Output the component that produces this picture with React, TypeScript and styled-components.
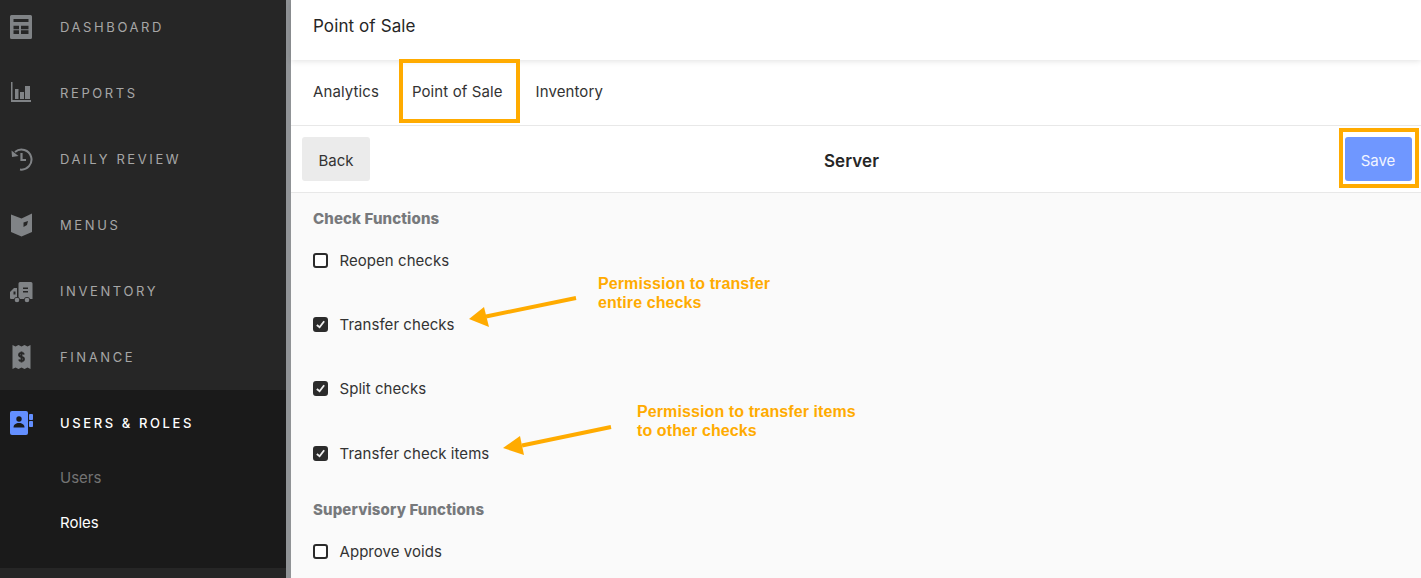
import React from 'react';
import styled, { createGlobalStyle } from 'styled-components';

const GlobalStyle = createGlobalStyle`
    html, body {
        margin: 0;
        padding: 0;
        height: 578px;
        overflow: hidden;
        background: #fafafa;
        font-family: Inter, "Liberation Sans", sans-serif;
    }
`;

const Page = styled.div`
    display: flex;
    width: 1421px;
    height: 578px;
    overflow: hidden;
`;

const Sidebar = styled.nav`
    width: 286px;
    flex-shrink: 0;
    background: #262626;
    border-right: 5px solid #909396;
    box-sizing: content-box;
`;

const NavList = styled.div`
    margin-top: -6px;
`;

const NavRow = styled.div<{ $active?: boolean }>`
    height: 66px;
    display: flex;
    align-items: center;
    gap: 27px;
    padding-left: 10px;
    color: ${(p) => (p.$active ? '#ffffff' : '#a6a6a6')};
    font-size: 13px;
    font-weight: ${(p) => (p.$active ? 500 : 400)};
    letter-spacing: 2.6px;
`;

const IconSlot = styled.div`
    width: 23px;
    height: 24px;
    display: flex;
    flex-shrink: 0;
    color: #808386;
`;

const ActiveGroup = styled.div`
    background: #1a1a1a;
    height: 178px;
`;

const SubItem = styled.div<{ $active?: boolean }>`
    height: 45px;
    display: flex;
    align-items: center;
    padding-left: 60px;
    font-size: 15px;
    color: ${(p) => (p.$active ? '#ffffff' : '#737373')};
`;

const SubList = styled.div`
    margin-top: -1px;
`;

const Main = styled.main`
    flex: 1;
    min-width: 0;
    position: relative;
    display: flex;
    flex-direction: column;
    letter-spacing: 0.1px;
`;

const TitleBar = styled.header`
    height: 60px;
    flex-shrink: 0;
    padding: 0 22px 8px;
    box-sizing: border-box;
    display: flex;
    align-items: center;
    background: #fff;
    font-size: 17px;
    color: #262626;
    box-shadow: 0 1px 6px rgba(0, 0, 0, 0.12);
    position: relative;
`;

const TabBar = styled.div`
    height: 66px;
    flex-shrink: 0;
    display: flex;
    align-items: center;
    background: #fff;
    border-bottom: 1px solid #e8e8e8;
    box-sizing: border-box;
    padding: 0 0 3px 22px;
    font-size: 15px;
    color: #333;
`;

const Tab = styled.div<{ $marked?: boolean }>`
    height: 64px;
    flex-shrink: 0;
    display: flex;
    align-items: center;
    box-sizing: border-box;
    position: relative;
    ${(p) =>
        p.$marked
            ? `
        border: 4px solid #ffab00;
        padding: 0 13px 0 9px;
        margin-left: 20px;
        margin-right: 16px;
    `
            : ''}
`;

const ActionBar = styled.div`
    height: 67px;
    flex-shrink: 0;
    display: grid;
    grid-template-columns: 1fr auto 1fr;
    align-items: center;
    background: #fff;
    border-bottom: 1px solid #e8e8e8;
    box-sizing: border-box;
    padding: 0 2px 0 11px;
`;

const BackButton = styled.button`
    justify-self: start;
    width: 68px;
    height: 44px;
    padding: 2px 0 0;
    border: none;
    border-radius: 3px;
    background: #ebebeb;
    color: #333;
    font: inherit;
    font-size: 15px;
`;

const ActionTitle = styled.div`
    margin-right: 18px;
    padding-top: 4px;
    font-size: 17px;
    font-weight: 600;
    color: #262626;
`;

const SaveFrame = styled.div`
    justify-self: end;
    width: 80px;
    height: 60px;
    margin-top: -2px;
    border: 4px solid #ffab00;
    box-sizing: border-box;
    display: flex;
    align-items: center;
    justify-content: center;
`;

const SaveButton = styled.button`
    width: 67px;
    height: 44px;
    margin: 2px 2px 0 0;
    padding: 2px 0 0;
    border: none;
    border-radius: 3px;
    background: #6f97ff;
    color: #f2f5ff;
    font: inherit;
    font-size: 15px;
`;

const Content = styled.section`
    flex: 1;
    background: #fafafa;
    padding: 0 22px;
    color: #333;
`;

const SectionTitle = styled.h3<{ $first?: boolean }>`
    margin: ${(p) => (p.$first ? '0 0 -2px' : '13px 0 -2px')};
    line-height: 22px;
    font-size: 15px;
    font-weight: 800;
    letter-spacing: 0.12px;
    color: #77797c;
    padding-top: ${(p) => (p.$first ? '15px' : '0')};
`;

const Permission = styled.div<{ $tall?: boolean }>`
    display: flex;
    align-items: center;
    gap: 11.5px;
    height: 64px;
    padding: ${(p) => (p.$tall ? '1px 0' : '0')};
    font-size: 15px;
    letter-spacing: 0.05px;
`;

const Check = styled.span<{ $on?: boolean }>`
    width: 15px;
    height: 15px;
    box-sizing: border-box;
    flex-shrink: 0;
    border: 2px solid #2b2b2b;
    border-radius: 3px;
    background: ${(p) => (p.$on ? '#2b2b2b' : '#fff')};
    display: flex;
    align-items: center;
    justify-content: center;
`;

const ArrowLayer = styled.svg`
    position: absolute;
    left: 0;
    top: 0;
    width: 1130px;
    height: 578px;
    pointer-events: none;
`;

const Note = styled.div<{ $left: number; $top: number }>`
    position: absolute;
    left: ${(p) => p.$left}px;
    top: ${(p) => p.$top}px;
    font-family: "Liberation Sans", Arial, sans-serif;
    font-size: 16px;
    font-weight: 700;
    line-height: 19px;
    letter-spacing: 0.1px;
    color: #ffab00;
    white-space: nowrap;
`;

const DashboardIcon = () => (
    <svg viewBox="0 0 23 24" width="23" height="24">
        <path
            fill="currentColor"
            fillRule="evenodd"
            d="M1.500 0h19A1.500 1.500 0 0 1 22 1.500v21a1.500 1.500 0 0 1-1.500 1.500h-19A1.500 1.500 0 0 1 0 22.500v-21A1.500 1.500 0 0 1 1.500 0ZM3.500 4v3h15V4h-15Zm0 6.800v3.500H9v-3.500H3.500Zm7.500 0v3.500h7.500v-3.500H11ZM3.500 15.300V19H9v-3.700H3.500Zm7.500 0V19h7.500v-3.700H11Z"
        />
    </svg>
);

const ReportsIcon = () => (
    <svg viewBox="0 0 23 24" width="23" height="24">
        <path
            fill="currentColor"
            d="M1 1h1.500v18H21v2H1V1Zm4 7h3.500v10H5V8Zm5 3h4v7h-4v-7Zm5-6h5v13h-5V5Z"
        />
    </svg>
);

const HistoryIcon = () => (
    <svg viewBox="0 0 23 24" width="23" height="24" fill="none" stroke="currentColor" strokeWidth="2">
        <path d="M5 5A10 10 0 1 1 10 22.500" />
        <path d="M1.500 3.500 2 10l6.500-1Z" fill="currentColor" stroke="none" />
        <path d="M11.500 6v7h4.500" strokeWidth="2.200" />
    </svg>
);

const MenusIcon = () => (
    <svg viewBox="0 0 23 24" width="23" height="24">
        <path
            fill="currentColor"
            fillRule="evenodd"
            d="M1 1.500 11.500 5.500 22 .5V19l-10.500 4.500L1 19V1.500ZM13.500 9.500V14L17 12l1-4-4.500 1.500Z"
        />
    </svg>
);

const TruckIcon = () => (
    <svg viewBox="0 0 23 24" width="23" height="24">
        <path
            fill="currentColor"
            fillRule="evenodd"
            d="M10 3h11a1.500 1.500 0 0 1 1.500 1.500V20H8.500V4.500A1.500 1.500 0 0 1 10 3Zm3 5.500V10h5V8.500h-5Zm0 3.500v1.500h5V12h-5Z"
        />
        <path
            fill="currentColor"
            fillRule="evenodd"
            d="M4 9h3v11H1a1 1 0 0 1-1-1v-6l4-4Zm-.500 3.500v3H5.500v-3h-2Z"
        />
        <circle cx="7" cy="21" r="3" fill="#262626" />
        <circle cx="17" cy="21" r="3" fill="#262626" />
        <circle cx="7" cy="21" r="2.300" fill="currentColor" />
        <circle cx="17" cy="21" r="2.300" fill="currentColor" />
    </svg>
);

const ReceiptIcon = () => (
    <svg viewBox="0 0 23 24" width="23" height="24">
        <path
            fill="currentColor"
            d="M2.500 0 5.500 1.500 8.500 0l3 1.500L14.500 0l3 1.500L20.500 0v24l-3-1.500-3 1.500-3-1.500-3 1.500-3-1.500-3 1.500V0Z"
        />
        <path
            fill="none"
            stroke="#262626"
            strokeWidth="1.800"
            d="M14 9.500c-.3-1-1.300-1.500-2.500-1.500S9 8.700 9 10c0 2.800 5 1.200 5 4 0 1.300-1.200 2-2.500 2S9.200 15.400 9 14.500M11.500 6.500v11"
        />
    </svg>
);

const UsersIcon = () => (
    <svg viewBox="0 0 23 24" width="23" height="24">
        <rect x="0" y="0" width="18" height="24" rx="2" fill="#638fff" />
        <rect x="19" y="3" width="4" height="6" rx="0.800" fill="#638fff" />
        <rect x="19" y="10" width="4" height="6" rx="0.800" fill="#638fff" />
        <circle cx="9" cy="8" r="2.700" fill="#1a1a1a" />
        <path d="M3.500 16.500c0-3 2.500-4.500 5.500-4.500s5.500 1.500 5.500 4.500H3.500Z" fill="#1a1a1a" />
    </svg>
);

const navItems = [
    { label: 'DASHBOARD', icon: <DashboardIcon /> },
    { label: 'REPORTS', icon: <ReportsIcon /> },
    { label: 'DAILY REVIEW', icon: <HistoryIcon /> },
    { label: 'MENUS', icon: <MenusIcon /> },
    { label: 'INVENTORY', icon: <TruckIcon /> },
    { label: 'FINANCE', icon: <ReceiptIcon /> },
];

const CheckBox = ({ on }: { on?: boolean }) => (
    <Check $on={on}>
        {on && (
            <svg viewBox="0 0 12 12" width="11" height="11" fill="none" stroke="#eee" strokeWidth="2">
                <path d="M2 6.500 5 9l5-6.500" />
            </svg>
        )}
    </Check>
);

const App: React.FC = () => {
    return (
        <Page>
            <GlobalStyle />
            <Sidebar>
                <NavList>
                    {navItems.map((item) => (
                        <NavRow key={item.label}>
                            <IconSlot>{item.icon}</IconSlot>
                            {item.label}
                        </NavRow>
                    ))}
                    <ActiveGroup>
                        <NavRow $active>
                            <IconSlot><UsersIcon /></IconSlot>
                            USERS &amp; ROLES
                        </NavRow>
                        <SubList>
                            <SubItem>Users</SubItem>
                            <SubItem $active>Roles</SubItem>
                        </SubList>
                    </ActiveGroup>
                </NavList>
            </Sidebar>
            <Main>
                <TitleBar>Point of Sale</TitleBar>
                <TabBar>
                    <Tab>Analytics</Tab>
                    <Tab $marked>Point of Sale</Tab>
                    <Tab>Inventory</Tab>
                </TabBar>
                <ActionBar>
                    <BackButton>Back</BackButton>
                    <ActionTitle>Server</ActionTitle>
                    <SaveFrame>
                        <SaveButton>Save</SaveButton>
                    </SaveFrame>
                </ActionBar>
                <Content>
                    <SectionTitle $first>Check Functions</SectionTitle>
                    <Permission><CheckBox />Reopen checks</Permission>
                    <Permission><CheckBox on />Transfer checks</Permission>
                    <Permission><CheckBox on />Split checks</Permission>
                    <Permission $tall><CheckBox on />Transfer check items</Permission>
                    <SectionTitle>Supervisory Functions</SectionTitle>
                    <Permission><CheckBox />Approve voids</Permission>
                </Content>
                <ArrowLayer viewBox="0 0 1130 578">
                    <path d="M285 298 195 316.500" stroke="#ffab00" strokeWidth="4" />
                    <path d="M178 319 193 307 198 327Z" fill="#ffab00" />
                    <path d="M320 427 231 445.500" stroke="#ffab00" strokeWidth="4" />
                    <path d="M212 448 229 436 233 455Z" fill="#ffab00" />
                </ArrowLayer>
                <Note $left={307} $top={274}>Permission to transfer<br />entire checks</Note>
                <Note $left={346} $top={402}>Permission to transfer items<br />to other checks</Note>
            </Main>
        </Page>
    );
};

export default App;
